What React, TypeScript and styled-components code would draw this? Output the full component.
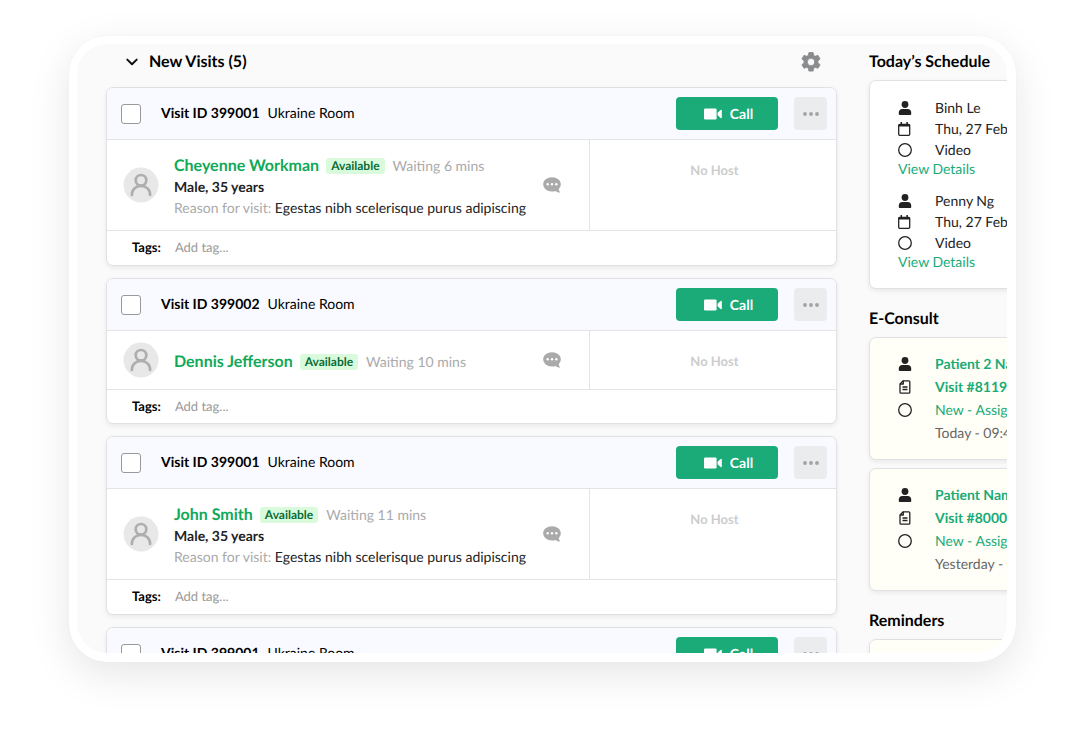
import React from "react";
import styled, { createGlobalStyle } from "styled-components";

const Global = createGlobalStyle`
  *, *::before, *::after { box-sizing: border-box; }
  body {
    margin: 0;
    background: #fff;
    color: #000;
    font-family: Lato, "Open Sans", sans-serif;
    font-size: 14px;
    line-height: 20px;
    text-rendering: geometricPrecision;
  }
  button, input { font: inherit; color: inherit; text-rendering: inherit; }
`;

const Stage = styled.main`
  display: flex;
  height: 100vh;
  min-height: 320px;
  padding: 36px 64px 73px 69px;
  overflow: hidden;
`;

const Frame = styled.div`
  flex: 1;
  min-width: 0;
  padding: 8px 9px 9px 8px;
  background: #fff;
  border-radius: 38px;
  box-shadow: 0 12px 42px rgba(0, 0, 0, 0.1), 0 0 2px rgba(0, 0, 0, 0.04);
`;

const Screen = styled.div`
  display: flex;
  gap: 32px;
  height: 100%;
  padding: 6px 0 0 29px;
  overflow: hidden;
  background: #fafafa;
  border-radius: 30px;
`;

const Visits = styled.section`
  flex: 1;
  min-width: 0;
`;

const VisitsHeader = styled.header`
  display: flex;
  align-items: center;
  justify-content: space-between;
  height: 24px;
  margin-bottom: 13px;
  padding: 0 16px 0 19px;
`;

const IconButton = styled.button`
  display: flex;
  padding: 0;
  border: 0;
  background: none;
  cursor: pointer;
`;

const CollapseButton = styled(IconButton)`
  align-items: center;
  gap: 10px;
`;

const Heading = styled.h2`
  margin: 0;
  font-size: 16px;
  font-weight: 700;
  line-height: 24px;
`;

const VisitList = styled.div`
  display: grid;
  gap: 12px;
`;

const Card = styled.article<{ $tone?: "cream" }>`
  overflow: hidden;
  background: ${(p) => (p.$tone === "cream" ? "#fffff7" : "#fff")};
  border: 1px solid #e0e1e2;
  border-radius: 7px;
  box-shadow: 0 2px 5px rgba(0, 0, 0, 0.07);
`;

const CardHeader = styled.header`
  display: flex;
  align-items: center;
  height: 52px;
  padding: 0 9px 0 14px;
  background: #f8faff;
  border-bottom: 1px solid #e3e4e6;
`;

const Checkbox = styled.input`
  appearance: none;
  width: 20px;
  height: 20px;
  margin: 0 20px 0 0;
  background: #fff;
  border: 1px solid #999;
  border-radius: 3px;
`;

const VisitId = styled.label`
  margin-right: 8px;
  padding-bottom: 1px;
  font-weight: 700;
`;

const Room = styled.span`
  flex: 1;
  padding-bottom: 1px;
`;

const CallButton = styled.button`
  display: flex;
  align-items: center;
  justify-content: center;
  gap: 8px;
  width: 102px;
  height: 33px;
  margin-right: 16px;
  padding: 0 0 0 3px;
  border: 0;
  border-radius: 4px;
  background: #1aab78;
  color: #fff;
  font-weight: 700;
`;

const MoreButton = styled.button`
  display: flex;
  align-items: center;
  justify-content: center;
  width: 33px;
  height: 33px;
  padding: 0;
  border: 0;
  border-radius: 4px;
  background: #ebecee;
`;

const CardBody = styled.div<{ $compact: boolean }>`
  display: grid;
  grid-template-columns: minmax(0, 1fr) 247px;
  height: ${(p) => (p.$compact ? 59 : 91)}px;
  border-bottom: 1px solid #e3e4e6;
`;

const PatientCell = styled.div`
  display: flex;
  align-items: center;
  padding: 0 28px 0 16px;
`;

const Avatar = styled.svg`
  flex: none;
  margin-right: 15px;
`;

const PatientInfo = styled.div`
  flex: 1;
  min-width: 0;
  padding-top: 3px;
  white-space: nowrap;
`;

const NameRow = styled.div`
  display: flex;
  align-items: center;
  height: 21px;
`;

const PatientName = styled.a`
  margin-right: 7px;
  color: #0fa958;
  font-size: 16px;
  font-weight: 700;
  text-decoration: none;
`;

const Badge = styled.span`
  margin-right: 8px;
  padding: 0 5px;
  background: #d9fbdc;
  border-radius: 3px;
  color: #0c6b35;
  font-size: 12px;
  font-weight: 700;
  line-height: 16px;
`;

const Muted = styled.span`
  color: #aaa;
`;

const Detail = styled.div<{ $bold?: boolean }>`
  color: #222;
  font-weight: ${(p) => (p.$bold ? 700 : 400)};
  line-height: 21px;
`;

const HostCell = styled.div`
  padding: 20px 0 0 3px;
  border-left: 1px solid #e3e4e6;
  color: #ccc;
  font-size: 13px;
  font-weight: 700;
  text-align: center;
`;

const TagRow = styled.label<{ $compact: boolean }>`
  display: flex;
  align-items: center;
  gap: 14px;
  height: ${(p) => (p.$compact ? 33 : 34)}px;
  padding: 0 25px 2px;
  font-size: 13px;
  font-weight: 700;
`;

const TagInput = styled.input`
  flex: 1;
  min-width: 0;
  padding: 0;
  border: 0;
  outline: 0;
  background: none;
  font-weight: 400;
  &::placeholder { color: #999; opacity: 1; }
`;

const Sidebar = styled.aside`
  flex: none;
  width: 240px;
  margin-right: -102px;
`;

const SideHeading = styled(Heading)`
  &:not(:first-child) { margin-top: 18px; }
`;

const SideList = styled.div`
  display: grid;
  gap: 8px;
  margin-top: 6px;
`;

const ScheduleCard = styled(Card)`
  display: grid;
  gap: 13px;
  padding: 16px 28px 18px;
`;

const ConsultCard = styled(Card)`
  padding: 14px 28px 15px;
`;

const InfoRow = styled.div<{ $tall?: boolean; $color?: string; $bold?: boolean }>`
  display: grid;
  grid-template-columns: 14px 1fr;
  gap: 23px;
  align-items: center;
  height: ${(p) => (p.$tall ? 23 : 21)}px;
  color: ${(p) => p.$color ?? "#222"};
  font-weight: ${(p) => (p.$bold ? 700 : 400)};
  white-space: nowrap;
  svg { color: #222; }
  span { grid-column: 2; }
`;

const DetailsLink = styled.a`
  display: block;
  color: #1aab78;
  line-height: 17px;
  text-decoration: none;
`;

const ChevronIcon = () => (
  <svg width="14" height="14" viewBox="0 0 14 14" fill="none" stroke="#111" strokeWidth="2" strokeLinecap="round" strokeLinejoin="round">
    <path d="M2.300 4.600 7 9.300l4.700-4.700" />
  </svg>
);

const GearIcon = () => (
  <svg width="20" height="20" viewBox="2 2 20 20" fill="#8a8b8e">
    <path fillRule="evenodd" stroke="#8a8b8e" strokeWidth=".8" strokeLinejoin="round" d="M9.900 2.500h4.200l.6 2.900 1.500.9 2.800-1 2.100 3.600-2.200 2v1.800l2.200 2-2.100 3.600-2.800-1-1.500.9-.6 2.900H9.900l-.6-2.900-1.500-.9-2.800 1-2.100-3.600 2.200-2v-1.800l-2.200-2L5 5.300l2.800 1 1.500-.9zM12 8.300a3.700 3.700 0 1 0 0 7.400 3.700 3.700 0 0 0 0-7.400z" />
  </svg>
);

const VideoIcon = () => (
  <svg width="18" height="12" viewBox="0 0 18 12" fill="#fff">
    <rect x="0" y=".4" width="12.600" height="11.200" rx="1.300" />
    <path d="M13.600 4.700 16.600 2q1.200-.8 1.200.4v7.200q0 1.200-1.200.4l-3-2.700z" />
  </svg>
);

const DotsIcon = () => (
  <svg width="16" height="4" viewBox="0 0 16 4" fill="#a2a3a5">
    <circle cx="2" cy="2" r="1.900" />
    <circle cx="8" cy="2" r="1.900" />
    <circle cx="14" cy="2" r="1.900" />
  </svg>
);

const ChatIcon = () => (
  <svg width="18" height="16" viewBox="0 0 18 16">
    <path d="M9 .2c4.900 0 8.800 3 8.800 7 0 2-.9 3.600-2.100 4.800.1 1.200.6 2.300 1.500 3.400-1.800 0-3.400-.5-4.600-1.500-1.100.4-2.300.6-3.600.6C4.100 14.500.2 11.400.2 7.300S4.100.2 9 .2z" fill="#aaa" />
    <g fill="#fff"><circle cx="4.700" cy="7.300" r="1.200" /><circle cx="9" cy="7.300" r="1.200" /><circle cx="13.300" cy="7.300" r="1.200" /></g>
  </svg>
);

const AvatarIcon = () => (
  <Avatar width="36" height="36" viewBox="0 0 36 36" fill="none" aria-hidden="true">
    <circle cx="18" cy="18" r="17.500" fill="#e8e8e8" />
    <g stroke="#aeaeae" strokeWidth="2.700" strokeLinecap="round">
      <circle cx="18" cy="13.300" r="5.300" />
      <path d="M8.900 27.900c0-5.300 4-9.100 9.100-9.100s9.100 3.800 9.100 9.100" />
    </g>
  </Avatar>
);

const PersonIcon = () => (
  <svg width="14" height="14" viewBox="0 0 14 14" fill="currentColor">
    <circle cx="7" cy="3.500" r="3.400" />
    <path d="M.8 13.200v-1.700C.8 9.300 2.300 8 4.100 8h5.800c1.800 0 3.300 1.300 3.300 3.500v1.700q0 .7-.7.7h-11q-.7 0-.7-.7z" />
  </svg>
);

const CalendarIcon = () => (
  <svg width="14" height="14" viewBox="0 0 14 14" fill="none" stroke="currentColor" strokeWidth="1.300">
    <rect x=".7" y="2.300" width="11" height="11" rx="1" />
    <path d="M.7 3.400h11" strokeWidth="2" />
    <path d="M3.300 0v3M9.100 0v3" strokeWidth="1.500" />
  </svg>
);

const CircleIcon = () => (
  <svg width="14" height="14" viewBox="0 0 14 14" fill="none" stroke="currentColor" strokeWidth="1.300">
    <circle cx="7" cy="7" r="6.300" />
  </svg>
);

const FileIcon = () => (
  <svg width="14" height="14" viewBox="0 0 14 14" fill="none" stroke="currentColor" strokeWidth="1.300" strokeLinejoin="round">
    <path d="M5.200.8h5.600q1 0 1 1v10.400q0 1-1 1H3q-1 0-1-1V4z" />
    <path d="M5.300.8V4H2M4.500 7h5M4.500 9.500h5" />
  </svg>
);

interface Visit {
  id: string;
  name: string;
  wait: string;
  about?: string;
  reason?: string;
}

const about = "Male, 35 years";
const reason = "Egestas nibh scelerisque purus adipiscing";

const visits: Visit[] = [
  { id: "399001", name: "Cheyenne Workman", wait: "Waiting 6 mins", about, reason },
  { id: "399002", name: "Dennis Jefferson", wait: "Waiting 10 mins" },
  { id: "399001", name: "John Smith", wait: "Waiting 11 mins", about, reason },
  { id: "399001", name: "John Smith", wait: "Waiting 11 mins", about, reason },
];

const schedule = ["Binh Le", "Penny Ng"];

const consults = [
  { patient: "Patient 2 Name", visit: "Visit #81190", time: "Today - 09:45" },
  { patient: "Patient Name", visit: "Visit #80007", time: "Yesterday - 09:45" },
];

const VisitCard = ({ visit, index }: { visit: Visit; index: number }) => {
  const compact = !visit.about;
  return (
    <Card>
      <CardHeader>
        <Checkbox type="checkbox" id={`visit-${index}`} />
        <VisitId htmlFor={`visit-${index}`}>Visit ID {visit.id}</VisitId>
        <Room>Ukraine Room</Room>
        <CallButton type="button"><VideoIcon />Call</CallButton>
        <MoreButton type="button" aria-label="More actions"><DotsIcon /></MoreButton>
      </CardHeader>
      <CardBody $compact={compact}>
        <PatientCell>
          <AvatarIcon />
          <PatientInfo>
            <NameRow>
              <PatientName href="#">{visit.name}</PatientName>
              <Badge>Available</Badge>
              <Muted>{visit.wait}</Muted>
            </NameRow>
            {visit.about && <Detail $bold>{visit.about}</Detail>}
            {visit.reason && <Detail><Muted>Reason for visit:</Muted> {visit.reason}</Detail>}
          </PatientInfo>
          <IconButton type="button" aria-label="Open chat"><ChatIcon /></IconButton>
        </PatientCell>
        <HostCell>No Host</HostCell>
      </CardBody>
      <TagRow $compact={compact}>
        Tags:
        <TagInput type="text" placeholder="Add tag..." />
      </TagRow>
    </Card>
  );
};

export default function App() {
  return (
    <>
      <Global />
      <Stage>
        <Frame>
          <Screen>
            <Visits>
              <VisitsHeader>
                <CollapseButton type="button" aria-expanded="true">
                  <ChevronIcon />
                  <Heading as="span">New Visits (5)</Heading>
                </CollapseButton>
                <IconButton type="button" aria-label="Settings"><GearIcon /></IconButton>
              </VisitsHeader>
              <VisitList>
                {visits.map((visit, index) => <VisitCard key={index} visit={visit} index={index} />)}
              </VisitList>
            </Visits>
            <Sidebar>
              <SideHeading>Today’s Schedule</SideHeading>
              <SideList>
                <ScheduleCard>
                  {schedule.map((name) => (
                    <div key={name}>
                      <InfoRow><PersonIcon /><span>{name}</span></InfoRow>
                      <InfoRow><CalendarIcon /><span>Thu, 27 Feb</span></InfoRow>
                      <InfoRow><CircleIcon /><span>Video</span></InfoRow>
                      <DetailsLink href="#">View Details</DetailsLink>
                    </div>
                  ))}
                </ScheduleCard>
              </SideList>
              <SideHeading>E-Consult</SideHeading>
              <SideList>
                {consults.map((item) => (
                  <ConsultCard key={item.visit} $tone="cream">
                    <InfoRow $tall $bold $color="#1aab78"><PersonIcon /><span>{item.patient}</span></InfoRow>
                    <InfoRow $tall $bold $color="#1aab78"><FileIcon /><span>{item.visit}</span></InfoRow>
                    <InfoRow $tall $color="#1aab78"><CircleIcon /><span>New - Assigned</span></InfoRow>
                    <InfoRow $tall $color="#666"><span>{item.time}</span></InfoRow>
                  </ConsultCard>
                ))}
              </SideList>
              <SideHeading>Reminders</SideHeading>
              <SideList>
                <ConsultCard $tone="cream">
                  <InfoRow $tall />
                </ConsultCard>
              </SideList>
            </Sidebar>
          </Screen>
        </Frame>
      </Stage>
    </>
  );
}
